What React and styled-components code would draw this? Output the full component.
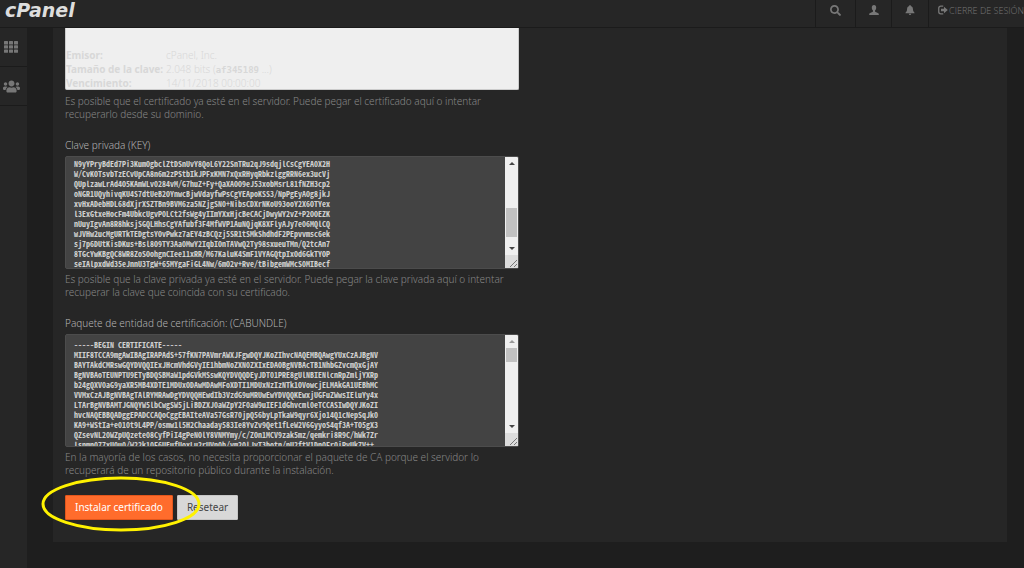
import React from "react";
import styled, { createGlobalStyle } from "styled-components";
import { FaSearch, FaUsers } from "react-icons/fa";

const KEY_TEXT = `N9yYPryBdEd7Pi3KumOgbclZtDSnUvY8QoL6Y22SnTRu2qJ9sdqjlCsCgYEA0X2H
W/CvKOTsvbTzECvUpCA8n6m2zPStbIkJPFxKMN7xQxRHyqRbkzlggRRN6ex3ucVj
QUplzawLrAd4O5KAmWLv0284vM/G7huZ+Fy+QaXAOO9eJ53xobMsrL81fNZH3cp2
oNGR1UQyhivqKU4S7dtUeB2OYnwcBjwVdayfwPsCgYEApoKSS3/NpPgEyAOg8jkJ
xvHxADebHDL68dXjrXSZTBn9BVM6za5NZjgSN0+NibsCDXrNKoU93ooY2X6OTYex
l3ExGtxeHocFm4UbkcUgvP0LCt2fsWg4yIImYXxHjcBeCACjDwyWY2vZ+P2OOEZK
nUuyIgvAn8R8hksjSGQLHhsCgYAfubf3F4MfWVP1AuNQjqK8XFlyAJy7e06MQlCQ
wJVHw2ucMgURTkTEDgtsYOvPwkz7aEY4zBCQzj5SR1tSMkShdhdF2PEpvvmsc6ek
sj7p6DUtKisDKus+Bsl8O9TY3Aa0MwY2IqbIOnTAVwQ2Ty98sxueuTMn/Q2tcAn7
8TGcYwKBgQC8WR8ZoSOohgnCIee11xRR/M67KaluK4SmF1VYAGQtpIxOd6GkTYOP
seIAlpxdWd35eJnnU3TgW+65MYgaFiGL4Nw/6mO2v+Rve/tBibgemWMcS0MIBecf`;

const BUNDLE_TEXT = `-----BEGIN CERTIFICATE-----
MIIF8TCCA9mgAwIBAgIRAPAdS+57fKN7PAVmrAWXJFgwDQYJKoZIhvcNAQEMBQAwgYUxCzAJBgNV
BAYTAkdCMRswGQYDVQQIExJHcmVhdGVyIE1hbmNoZXN0ZXIxEDAOBgNVBAcTB1NhbGZvcmQxGjAY
BgNVBAoTEUNPTU9ETyBDQSBMaW1pdGVkMSswKQYDVQQDEyJDT01PRE8gUlNBIENlcnRpZmljYXRp
b24gQXV0aG9yaXR5MB4XDTE1MDUxODAwMDAwMFoXDTI1MDUxNzIzNTk1OVowcjELMAkGA1UEBhMC
VVMxCzAJBgNVBAgTAlRYMRAwDgYDVQQHEwdIb3VzdG9uMRUwEwYDVQQKEwxjUGFuZWwsIEluYy4x
LTArBgNVBAMTJGNQYW5lbCwgSW5jLiBDZXJ0aWZpY2F0aW9uIEF1dGhvcml0eTCCASIwDQYJKoZI
hvcNAQEBBQADggEPADCCAQoCggEBAIteAVa57GsR70jpQ56byLpTkaW9qyr6Xjo14Q1cNepSqJk0
KA9+WStIa+e010t9L4PP/osmw1l5H2Chaaday583Ie8YvZv9Qet1fLeW2V6GyyoS4qf3A+TO5gX3
QZsevNL20WZpUQzete08CyfPiI4gPeNOlY8VNMYmy/c/ZOn1MCV9zak5mz/qemkri8R9C/hWk7Zr
lsnmn077xU0u0/W22k10F6UEufUoxLu2rUVn0b/vm20lJvT3botn/nU2ftV1Dn0Fr0iPvUk7V++`;

const UserIcon = () => (
  <svg width="10" height="10" viewBox="0 0 20 20" aria-hidden="true">
    <path
      fill="currentColor"
      d="M10 0C7 0 5.600 2 5.600 5c0 2.400.8 4.600 2.400 6v1.600c0 .8-.6 1.200-1.400 1.600L2.400 15.800C1 16.400.400 17 .400 18.400V20h19.200v-1.600c0-1.400-.6-2-2-2.600l-4.200-1.600c-.8-.4-1.400-.8-1.400-1.600V11c1.600-1.400 2.400-3.600 2.400-6 0-3-1.400-5-4.400-5z"
    />
  </svg>
);

const BellIcon = () => (
  <svg width="10" height="10" viewBox="0 0 20 20" aria-hidden="true">
    <path
      fill="currentColor"
      d="M10 0c-1 0-1.600.6-1.600 1.600v.6C5.600 3 4.400 5 4.200 7.600L3.600 12 1 15.400V16.600h18v-1.200L16.400 12l-.6-4.400C15.600 5 14.400 3 11.600 2.200v-.6C11.600.6 11 0 10 0zM7.600 17.600a2.400 2.400 0 0 0 4.800 0z"
    />
  </svg>
);

const SignOutIcon = () => (
  <svg width="10" height="10" viewBox="0 0 20 20" aria-hidden="true">
    <path
      fill="none"
      stroke="currentColor"
      strokeWidth="2.600"
      d="M10.500 2.300H5.500a4 4 0 0 0-4 4v7.400a4 4 0 0 0 4 4h5"
    />
    <path fill="currentColor" d="M6 7.600h6V3.600l7.600 6.400-7.600 6.400v-4H6z" />
  </svg>
);

const GridIcon = () => (
  <svg width="14" height="12" viewBox="0 0 14 12" aria-hidden="true">
    {[0, 5, 10].map((x) =>
      [0, 4.2, 8.4].map((y) => (
        <rect
          key={`${x}-${y}`}
          x={x}
          y={y}
          width="4"
          height="3.4"
          rx="0.5"
          fill="currentColor"
        />
      ))
    )}
  </svg>
);

const ScrollBar = ({ top, size, atTop }) => (
  <Scroll aria-hidden="true">
    <Arrow $dim={atTop}>
      <svg width="6" height="3" viewBox="0 0 6 3">
        <path d="M0 3L3 0l3 3z" fill="currentColor" />
      </svg>
    </Arrow>
    <Track>
      <Thumb style={{ marginTop: top, height: size }} />
    </Track>
    <Arrow>
      <svg width="6" height="3" viewBox="0 0 6 3">
        <path d="M0 0l3 3 3-3z" fill="currentColor" />
      </svg>
    </Arrow>
    <Grip>
      <svg width="9" height="9" viewBox="0 0 9 9">
        <path d="M1 8l7-7M5 8l3-3" stroke="#777" fill="none" />
      </svg>
    </Grip>
  </Scroll>
);

const App = () => {
  return (
    <>
      <GlobalStyle />
      <Header>
        <Logo href="#">cPanel</Logo>
        <Nav>
          <NavButton $width={40} aria-label="Buscar">
            <FaSearch size={11} />
          </NavButton>
          <NavButton $width={36} aria-label="Usuario">
            <UserIcon />
          </NavButton>
          <NavButton $width={37} aria-label="Notificaciones">
            <BellIcon />
          </NavButton>
          <Logout href="#">
            <SignOutIcon />
            CIERRE DE SESIÓN
          </Logout>
        </Nav>
      </Header>
      <Body>
        <Sidebar>
          <SideButton aria-label="Inicio">
            <GridIcon />
          </SideButton>
          <SideButton aria-label="Usuarios">
            <FaUsers size={17} />
          </SideButton>
        </Sidebar>
        <Main>
          <Panel>
            <CertificateBox>
              <CertificateInput aria-label="Certificado (CRT)" />
              <Details>
                <dt>Emisor:</dt>
                <dd>cPanel, Inc.</dd>
                <dt>Tamaño de la clave:</dt>
                <dd>
                  2.048 bits (<code>af345189</code> ...)
                </dd>
                <dt>Vencimiento:</dt>
                <dd>14/11/2018 00:00:00</dd>
              </Details>
            </CertificateBox>
            <Help>
              Es posible que el certificado ya esté en el servidor. Puede pegar
              el certificado aquí o intentar recuperarlo desde su dominio.
            </Help>

            <Label htmlFor="key">Clave privada (KEY)</Label>
            <Editor>
              <Code id="key" defaultValue={KEY_TEXT} spellCheck={false} />
              <ScrollBar top={38} size={29} />
            </Editor>
            <Help>
              Es posible que la clave privada ya esté en el servidor. Puede
              pegar la clave privada aquí o intentar recuperar la clave que
              coincida con su certificado.
            </Help>

            <Label htmlFor="bundle">
              Paquete de entidad de certificación: (CABUNDLE)
            </Label>
            <Editor>
              <Code
                id="bundle"
                $padded
                defaultValue={BUNDLE_TEXT}
                spellCheck={false}
              />
              <ScrollBar top={0} size={14} atTop />
            </Editor>
            <Help>
              En la mayoría de los casos, no necesita proporcionar el paquete de
              CA porque el servidor lo recuperará de un repositorio público
              durante la instalación.
            </Help>

            <Actions>
              <Button $primary>Instalar certificado</Button>
              <Button>Resetear</Button>
              <Highlight viewBox="0 0 160 58" aria-hidden="true">
                <ellipse cx="80" cy="29" rx="78" ry="26" />
              </Highlight>
            </Actions>
          </Panel>
        </Main>
      </Body>
    </>
  );
};

export default App;

const GlobalStyle = createGlobalStyle`
  * {
    box-sizing: border-box;
  }
  body {
    margin: 0;
    background-color: #1e1e1e;
    color: #868686;
    font-family: "Noto Sans", "Open Sans", sans-serif;
    font-weight: 300;
    font-size: 10px;
    line-height: 13px;
  }
  button, textarea {
    margin: 0;
    font: inherit;
  }
`;
const Header = styled.header`
  display: flex;
  justify-content: space-between;
  height: 28px;
  background-color: #262626;
  border-bottom: 1px solid #1b1b1b;
  overflow: hidden;
`;
const Logo = styled.a`
  padding-left: 5px;
  color: #ddd;
  font-family: "DejaVu Sans", sans-serif;
  font-size: 19px;
  font-weight: 700;
  font-style: italic;
  line-height: 21px;
  text-decoration: none;
`;
const Nav = styled.nav`
  display: flex;
  color: #777;
`;
const NavButton = styled.button`
  display: flex;
  justify-content: center;
  width: ${({ $width }) => $width}px;
  padding: 5px 0 0;
  border: 0;
  border-left: 1px solid #1b1b1b;
  background: none;
  color: inherit;
`;
const Logout = styled.a`
  display: flex;
  gap: 1px;
  padding: 5px 0 0 9px;
  border-left: 1px solid #1b1b1b;
  color: inherit;
  font-family: "Open Sans", sans-serif;
  font-size: 9px;
  line-height: 11px;
  text-decoration: none;
  white-space: nowrap;
`;
const Body = styled.div`
  display: flex;
  min-height: calc(100vh - 28px);
`;
const Sidebar = styled.aside`
  flex: none;
  width: 27px;
  background-color: #262626;
`;
const SideButton = styled.button`
  display: grid;
  place-items: center;
  width: 100%;
  height: 39px;
  padding: 0 5px 0 0;
  border: 0;
  border-bottom: 1px solid #1b1b1b;
  background: none;
  color: #777;
`;
const Main = styled.main`
  flex: 1;
  padding: 0 17px 25px 26px;
`;
const Panel = styled.form`
  padding: 0 12px 22px;
  background-color: #262626;
`;
const CertificateBox = styled.div`
  position: relative;
  max-width: 454px;
  margin-bottom: 5px;
`;
const CertificateInput = styled.textarea`
  display: block;
  width: 100%;
  height: 62px;
  border: 1px solid #ccc;
  border-top: 0;
  border-radius: 0 0 2px 2px;
  background-color: #efefef;
  resize: none;
`;
const Details = styled.dl`
  position: absolute;
  left: 1px;
  bottom: 0;
  display: grid;
  grid-template-columns: 100px auto;
  grid-auto-rows: 14px;
  margin: 0;
  color: #d8d8d8;
  line-height: 14px;
  white-space: nowrap;
  pointer-events: none;

  dt {
    font-weight: 700;
  }
  dd {
    margin: 0;
  }
  code {
    font-family: "DejaVu Sans Mono", monospace;
    font-size: 9px;
    font-weight: 700;
  }
`;
const Help = styled.p`
  max-width: 454px;
  margin: 4px 0 18px;
`;
const Label = styled.label`
  display: block;
  margin-bottom: 4px;
  color: #b4b4b4;
`;
const Editor = styled.div`
  display: flex;
  max-width: 454px;
  height: 113px;
  border: 1px solid #4c4c4c;
  border-radius: 2px;
  background-color: #434343;
  overflow: hidden;
`;
const Code = styled.textarea`
  flex: 1;
  padding: ${({ $padded }) => ($padded ? "5px" : "2px")} 8px 0;
  border: 0;
  background: none;
  color: #d0d0d0;
  font-family: "Noto Sans Mono CJK SC", "Liberation Mono", monospace;
  font-size: 8px;
  font-weight: 700;
  line-height: 10px;
  white-space: pre;
  resize: none;
  overflow: hidden;
  outline: 0;
`;
const Scroll = styled.div`
  display: flex;
  flex-direction: column;
  width: 13px;
  background-color: #efefef;
`;
const Arrow = styled.div`
  display: grid;
  place-items: center;
  height: 13px;
  color: ${({ $dim }) => ($dim ? "#999" : "#444")};
`;
const Track = styled.div`
  display: flow-root;
  flex: 1;
  padding: 0 1px;
`;
const Thumb = styled.div`
  background-color: #c1c1c1;
`;
const Grip = styled.div`
  display: grid;
  place-items: end;
  height: 13px;
  background-color: #dcdcdc;
`;
const Actions = styled.div`
  position: relative;
  display: flex;
  gap: 4px;
`;
const Button = styled.button`
  height: 25px;
  padding: 0 9px;
  border: 1px solid ${({ $primary }) => ($primary ? "#e2561c" : "#c6c6c6")};
  border-radius: 1px;
  background-color: ${({ $primary }) => ($primary ? "#ff6c2c" : "#d8d8d8")};
  color: ${({ $primary }) => ($primary ? "#fff" : "#444")};
  font-weight: 400;
`;
const Highlight = styled.svg`
  position: absolute;
  left: -24px;
  top: -20px;
  width: 160px;
  height: 58px;
  fill: none;
  stroke: #fff200;
  stroke-width: 3px;
  pointer-events: none;
`;
